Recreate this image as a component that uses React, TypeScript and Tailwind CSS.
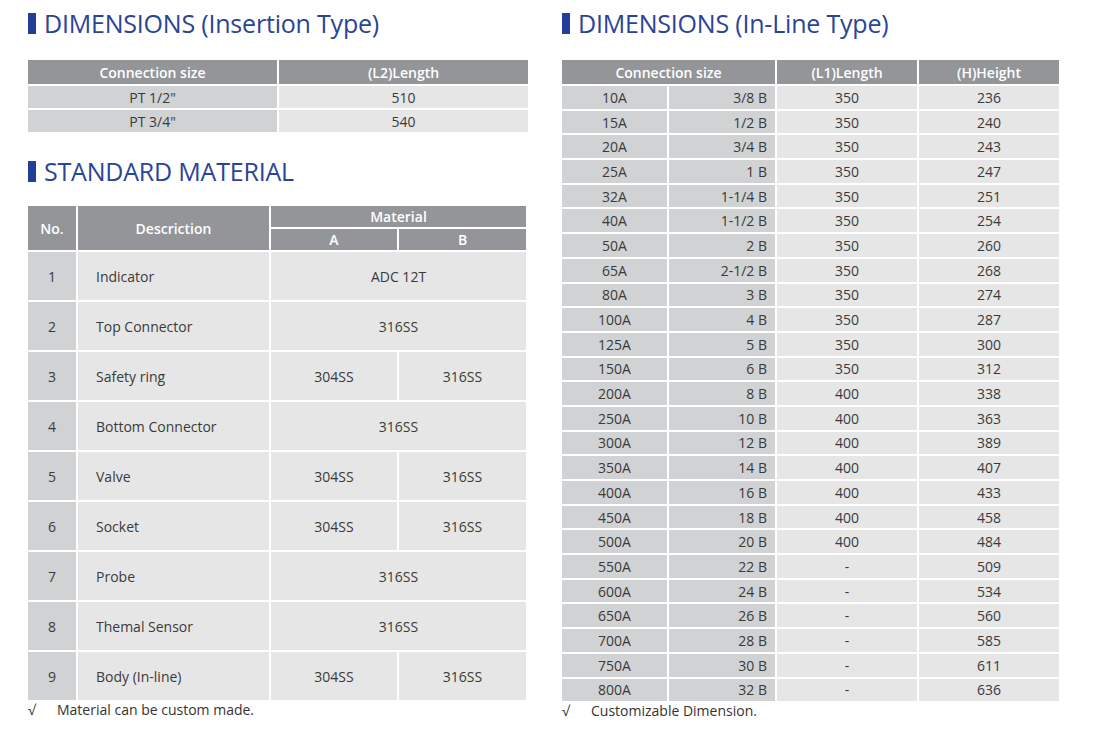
const HEAD = "bg-[#939598] text-white font-semibold";
const DARK = "bg-[#d1d2d4]";
const LIGHT = "bg-[#e6e6e7]";

const insertion = [
  ["PT 1/2\"", "510"],
  ['PT 3/4"', "540"],
];

const materials: Array<[string, string, string, string?]> = [
  ["1", "Indicator", "ADC 12T"],
  ["2", "Top Connector", "316SS"],
  ["3", "Safety ring", "304SS", "316SS"],
  ["4", "Bottom Connector", "316SS"],
  ["5", "Valve", "304SS", "316SS"],
  ["6", "Socket", "304SS", "316SS"],
  ["7", "Probe", "316SS"],
  ["8", "Themal Sensor", "316SS"],
  ["9", "Body (In-line)", "304SS", "316SS"],
];

const inline: Array<[string, string, string, string]> = [
  ["10A", "3/8 B", "350", "236"],
  ["15A", "1/2 B", "350", "240"],
  ["20A", "3/4 B", "350", "243"],
  ["25A", "1 B", "350", "247"],
  ["32A", "1-1/4 B", "350", "251"],
  ["40A", "1-1/2 B", "350", "254"],
  ["50A", "2 B", "350", "260"],
  ["65A", "2-1/2 B", "350", "268"],
  ["80A", "3 B", "350", "274"],
  ["100A", "4 B", "350", "287"],
  ["125A", "5 B", "350", "300"],
  ["150A", "6 B", "350", "312"],
  ["200A", "8 B", "400", "338"],
  ["250A", "10 B", "400", "363"],
  ["300A", "12 B", "400", "389"],
  ["350A", "14 B", "400", "407"],
  ["400A", "16 B", "400", "433"],
  ["450A", "18 B", "400", "458"],
  ["500A", "20 B", "400", "484"],
  ["550A", "22 B", "-", "509"],
  ["600A", "24 B", "-", "534"],
  ["650A", "26 B", "-", "560"],
  ["700A", "28 B", "-", "585"],
  ["750A", "30 B", "-", "611"],
  ["800A", "32 B", "-", "636"],
];

function Heading({ children }: { children: React.ReactNode }) {
  return (
    <h2 className="flex items-center gap-[8px] text-[25px] leading-none tracking-[-0.2px] text-[#2a4595]">
      <span className="h-[21px] w-[8px] bg-[#213f99]" />
      {children}
    </h2>
  );
}

function Note({ children }: { children: React.ReactNode }) {
  return (
    <p className="flex text-[14px] leading-[20px] text-[#333]">
      <span className="w-[29px]">√</span>
      {children}
    </p>
  );
}

export default function App() {
  return (
    <div
      className="flex h-[730px] w-[1100px] gap-[34px] bg-white pl-[28px] pt-[11px] text-[14px] text-[#3a3a3a]"
      style={{ fontFamily: '"Open Sans", "Noto Sans", sans-serif' }}
    >
      {/* left column */}
      <div className="flex w-[500px] flex-col">
        <Heading>DIMENSIONS (Insertion Type)</Heading>

        <div className="mt-[24px] grid grid-cols-[249px_249px] gap-[2px]">
          <div className={`${HEAD} flex h-[24px] items-center justify-center`}>Connection size</div>
          <div className={`${HEAD} flex h-[24px] items-center justify-center`}>(L2)Length</div>
          {insertion.map(([a, b]) => (
            <>
              <div key={a} className={`${DARK} flex h-[22px] items-center justify-center`}>{a}</div>
              <div key={a + b} className={`${LIGHT} flex h-[22px] items-center justify-center`}>{b}</div>
            </>
          ))}
        </div>

        <div className="mt-[27px]">
          <Heading>STANDARD MATERIAL</Heading>
        </div>

        <div className="mt-[22px] grid w-[498px] grid-cols-[48px_191px_126px_127px] gap-[2px]">
          <div className={`${HEAD} row-span-2 flex items-center justify-center`}>No.</div>
          <div className={`${HEAD} row-span-2 flex items-center justify-center`}>Descriction</div>
          <div className={`${HEAD} col-span-2 flex h-[21px] items-center justify-center`}>Material</div>
          <div className={`${HEAD} flex h-[21px] items-center justify-center`}>A</div>
          <div className={`${HEAD} flex h-[21px] items-center justify-center`}>B</div>
          {materials.map(([no, desc, a, b]) => (
            <>
              <div key={no} className={`${DARK} flex h-[48px] items-center justify-center`}>{no}</div>
              <div key={no + "d"} className={`${LIGHT} flex items-center pl-[18px]`}>{desc}</div>
              {b ? (
                <>
                  <div key={no + "a"} className={`${LIGHT} flex items-center justify-center`}>{a}</div>
                  <div key={no + "b"} className={`${LIGHT} flex items-center justify-center`}>{b}</div>
                </>
              ) : (
                <div key={no + "a"} className={`${LIGHT} col-span-2 flex items-center justify-center`}>{a}</div>
              )}
            </>
          ))}
        </div>
        <Note>Material can be custom made.</Note>
      </div>

      {/* right column */}
      <div className="flex w-[497px] flex-col">
        <Heading>DIMENSIONS (In-Line Type)</Heading>

        <div className="mt-[24px] grid grid-cols-[105px_106px_140px_140px] gap-[2px]">
          <div className={`${HEAD} col-span-2 flex h-[24px] items-center justify-center`}>Connection size</div>
          <div className={`${HEAD} flex h-[24px] items-center justify-center`}>(L1)Length</div>
          <div className={`${HEAD} flex h-[24px] items-center justify-center`}>(H)Height</div>
          {inline.map(([a, b, l, h]) => (
            <>
              <div key={a} className={`${DARK} flex h-[22.7px] items-center justify-center`}>{a}</div>
              <div key={a + "b"} className={`${DARK} flex items-center justify-end pr-[8px]`}>{b}</div>
              <div key={a + "l"} className={`${LIGHT} flex items-center justify-center`}>{l}</div>
              <div key={a + "h"} className={`${LIGHT} flex items-center justify-center`}>{h}</div>
            </>
          ))}
        </div>
        <Note>Customizable Dimension.</Note>
      </div>
    </div>
  );
}
